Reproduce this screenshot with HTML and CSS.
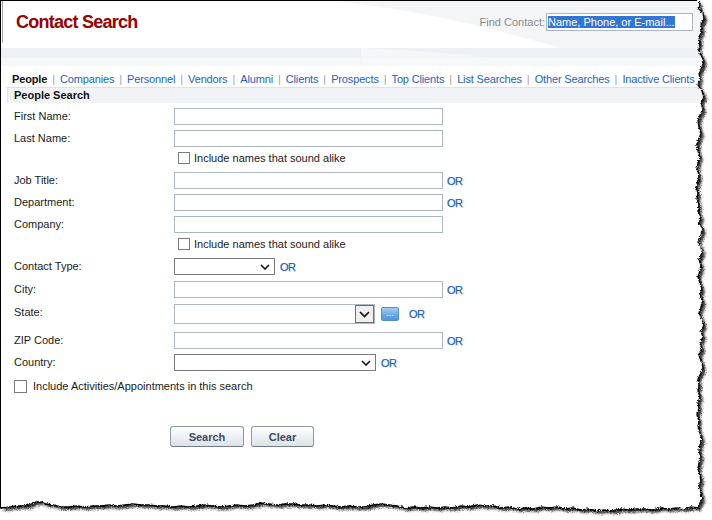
FILE: index.html
```html
<!DOCTYPE html>
<html>
<head>
<meta charset="utf-8">
<title>Contact Search</title>
<link rel="stylesheet" href="styles.css">
</head>
<body>
<div class="shot">
  <div class="page">
    <header class="header">
      <svg class="header-bg" width="711" height="65" viewBox="0 0 711 65">
        <rect x="0" y="0" width="711" height="65" fill="#ffffff"/>
        <path d="M330,0 C420,8 500,30 560,47 L711,47 L711,0 Z" fill="#f3f5f7"/>
        <rect x="0" y="47" width="711" height="10" fill="#edf0f4"/>
        <rect x="0" y="57" width="711" height="8" fill="#f5f7f9"/>
        <path d="M360,47 C440,50 500,57 545,65 L360,65 Z" fill="#f7f8fa" opacity="0.7"/>
        <rect x="1" y="0" width="1" height="42" fill="#a8a8a8"/>
      </svg>
      <h1 class="title">Contact Search</h1>
      <div class="find">
        <span class="find-label">Find Contact:</span>
        <span class="find-box"><span class="find-sel">Name, Phone, or E-mail...</span></span>
      </div>
    </header>

    <nav class="tabs">
      <span class="tab-active">People</span><span class="sep">|</span>
      <a class="tab" href="#">Companies</a><span class="sep">|</span>
      <a class="tab" href="#">Personnel</a><span class="sep">|</span>
      <a class="tab" href="#">Vendors</a><span class="sep">|</span>
      <a class="tab" href="#">Alumni</a><span class="sep">|</span>
      <a class="tab" href="#">Clients</a><span class="sep">|</span>
      <a class="tab" href="#">Prospects</a><span class="sep">|</span>
      <a class="tab" href="#">Top Clients</a><span class="sep">|</span>
      <a class="tab" href="#">List Searches</a><span class="sep">|</span>
      <a class="tab" href="#">Other Searches</a><span class="sep">|</span>
      <a class="tab" href="#">Inactive Clients</a>
    </nav>

    <div class="section-bar">People Search</div>

    <div class="form">
      <div class="row h22">
        <div class="label">First Name:</div>
        <div class="ctl"><span class="input"></span></div>
      </div>
      <div class="row h22">
        <div class="label">Last Name:</div>
        <div class="ctl"><span class="input"></span></div>
      </div>
      <div class="row h20">
        <div class="label"></div>
        <div class="ctl check-ctl"><span class="checkbox"></span><span class="check-text">Include names that sound alike</span></div>
      </div>
      <div class="row h22">
        <div class="label">Job Title:</div>
        <div class="ctl"><span class="input"></span><span class="or">OR</span></div>
      </div>
      <div class="row h22">
        <div class="label">Department:</div>
        <div class="ctl"><span class="input"></span><span class="or">OR</span></div>
      </div>
      <div class="row h22">
        <div class="label">Company:</div>
        <div class="ctl"><span class="input"></span></div>
      </div>
      <div class="row h20">
        <div class="label"></div>
        <div class="ctl check-ctl"><span class="checkbox"></span><span class="check-text">Include names that sound alike</span></div>
      </div>
      <div class="row h23">
        <div class="label">Contact Type:</div>
        <div class="ctl">
          <span class="select select-type">
            <svg class="chev" width="10" height="6" viewBox="0 0 10 6"><path d="M1 1 L5 5 L9 1" fill="none" stroke="#111" stroke-width="1.6"/></svg>
          </span>
          <span class="or or-sel">OR</span>
        </div>
      </div>
      <div class="row h23">
        <div class="label">City:</div>
        <div class="ctl"><span class="input"></span><span class="or">OR</span></div>
      </div>
      <div class="row h28">
        <div class="label">State:</div>
        <div class="ctl">
          <span class="select-state">
            <span class="state-btn">
              <svg width="11" height="7" viewBox="0 0 11 7"><path d="M1 1 L5.5 5.5 L10 1" fill="none" stroke="#111" stroke-width="1.7"/></svg>
            </span>
          </span>
          <span class="dots-btn">...</span>
          <span class="or or-state">OR</span>
        </div>
      </div>
      <div class="row h22">
        <div class="label">ZIP Code:</div>
        <div class="ctl"><span class="input"></span><span class="or">OR</span></div>
      </div>
      <div class="row h26">
        <div class="label">Country:</div>
        <div class="ctl">
          <span class="select select-country">
            <svg class="chev" width="10" height="6" viewBox="0 0 10 6"><path d="M1 1 L5 5 L9 1" fill="none" stroke="#111" stroke-width="1.6"/></svg>
          </span>
          <span class="or or-sel">OR</span>
        </div>
      </div>
      <div class="row-activities">
        <span class="checkbox big"></span><span class="act-text">Include Activities/Appointments in this search</span>
      </div>
      <div class="buttons">
        <span class="btn btn-search">Search</span>
        <span class="btn btn-clear">Clear</span>
      </div>
    </div>
  </div>

  <svg class="torn" width="712" height="520" viewBox="0 0 712 520">
    <defs>
      <clipPath id="outside">
        <path d="M697,0 L699,4 L698,8 L702,12 L703,18 L700,24 L701,30 L698,36 L699,42 L697,48 L700,54 L703,60 L701,66 L698,72 L699,78 L697,84 L701,90 L703,96 L700,102 L702,108 L699,114 L697,120 L698,126 L700,132 L698,138 L696,144 L697,150 L699,156 L697,162 L696,168 L698,174 L697,180 L695,186 L697,192 L696,198 L698,204 L697,210 L700,216 L698,222 L702,228 L700,234 L697,240 L700,246 L701,252 L698,258 L700,264 L699,270 L697,276 L699,282 L701,288 L699,294 L702,300 L700,306 L698,312 L701,318 L703,324 L700,330 L702,336 L699,342 L701,348 L698,354 L700,360 L702,366 L700,372 L697,378 L698,384 L697,390 L699,396 L697,402 L698,408 L696,414 L698,420 L697,426 L699,432 L701,438 L699,444 L698,450 L700,456 L698,462 L697,468 L699,474 L700,480 L698,486 L700,492 L701,498 L698,504 L697,507 L690,506 L684,508 L676,507 L668,508 L660,507 L652,509 L644,508 L636,508 L628,509 L620,508 L612,510 L604,509 L596,510 L588,508 L580,509 L572,507 L564,508 L556,506 L548,507 L540,506 L532,508 L524,507 L516,508 L508,506 L500,507 L492,505 L484,505 L476,504 L468,506 L460,505 L452,507 L444,506 L436,507 L428,506 L420,507 L412,506 L404,507 L396,505 L388,504 L380,503 L372,504 L364,506 L356,506 L348,505 L340,506 L332,505 L324,504 L316,505 L308,504 L300,504 L292,503 L284,503 L276,504 L268,503 L260,502 L252,504 L244,505 L236,504 L228,505 L220,506 L212,505 L204,504 L196,505 L188,506 L180,505 L172,506 L164,505 L156,505 L148,504 L140,504 L132,503 L124,504 L116,505 L108,504 L100,505 L92,505 L84,506 L76,505 L68,506 L60,506 L52,504 L45,503 L40,501 L35,501 L30,503 L24,505 L16,505 L8,506 L0,507 L0,520 L712,520 L712,0 Z"/>
      </clipPath>
      <filter id="blur" x="-5%" y="-5%" width="110%" height="110%">
        <feGaussianBlur stdDeviation="1.2"/>
      </filter>
      <filter id="rough" x="-3%" y="-3%" width="106%" height="106%">
        <feTurbulence type="turbulence" baseFrequency="0.55" numOctaves="1" seed="3" result="noise"/>
        <feDisplacementMap in="SourceGraphic" in2="noise" scale="3" xChannelSelector="R" yChannelSelector="G"/>
      </filter>
    </defs>
    <g filter="url(#rough)">
    <path d="M697,0 L699,4 L698,8 L702,12 L703,18 L700,24 L701,30 L698,36 L699,42 L697,48 L700,54 L703,60 L701,66 L698,72 L699,78 L697,84 L701,90 L703,96 L700,102 L702,108 L699,114 L697,120 L698,126 L700,132 L698,138 L696,144 L697,150 L699,156 L697,162 L696,168 L698,174 L697,180 L695,186 L697,192 L696,198 L698,204 L697,210 L700,216 L698,222 L702,228 L700,234 L697,240 L700,246 L701,252 L698,258 L700,264 L699,270 L697,276 L699,282 L701,288 L699,294 L702,300 L700,306 L698,312 L701,318 L703,324 L700,330 L702,336 L699,342 L701,348 L698,354 L700,360 L702,366 L700,372 L697,378 L698,384 L697,390 L699,396 L697,402 L698,408 L696,414 L698,420 L697,426 L699,432 L701,438 L699,444 L698,450 L700,456 L698,462 L697,468 L699,474 L700,480 L698,486 L700,492 L701,498 L698,504 L697,507 L690,506 L684,508 L676,507 L668,508 L660,507 L652,509 L644,508 L636,508 L628,509 L620,508 L612,510 L604,509 L596,510 L588,508 L580,509 L572,507 L564,508 L556,506 L548,507 L540,506 L532,508 L524,507 L516,508 L508,506 L500,507 L492,505 L484,505 L476,504 L468,506 L460,505 L452,507 L444,506 L436,507 L428,506 L420,507 L412,506 L404,507 L396,505 L388,504 L380,503 L372,504 L364,506 L356,506 L348,505 L340,506 L332,505 L324,504 L316,505 L308,504 L300,504 L292,503 L284,503 L276,504 L268,503 L260,502 L252,504 L244,505 L236,504 L228,505 L220,506 L212,505 L204,504 L196,505 L188,506 L180,505 L172,506 L164,505 L156,505 L148,504 L140,504 L132,503 L124,504 L116,505 L108,504 L100,505 L92,505 L84,506 L76,505 L68,506 L60,506 L52,504 L45,503 L40,501 L35,501 L30,503 L24,505 L16,505 L8,506 L0,507 L-20,507 L-20,540 L740,540 L740,-20 L697,-20 Z" fill="#ffffff"/>
    <g clip-path="url(#outside)">
      <path transform="translate(3,3)" filter="url(#blur)" fill="#3a3a3a" d="M0,0 L697,0 L699,4 L698,8 L702,12 L703,18 L700,24 L701,30 L698,36 L699,42 L697,48 L700,54 L703,60 L701,66 L698,72 L699,78 L697,84 L701,90 L703,96 L700,102 L702,108 L699,114 L697,120 L698,126 L700,132 L698,138 L696,144 L697,150 L699,156 L697,162 L696,168 L698,174 L697,180 L695,186 L697,192 L696,198 L698,204 L697,210 L700,216 L698,222 L702,228 L700,234 L697,240 L700,246 L701,252 L698,258 L700,264 L699,270 L697,276 L699,282 L701,288 L699,294 L702,300 L700,306 L698,312 L701,318 L703,324 L700,330 L702,336 L699,342 L701,348 L698,354 L700,360 L702,366 L700,372 L697,378 L698,384 L697,390 L699,396 L697,402 L698,408 L696,414 L698,420 L697,426 L699,432 L701,438 L699,444 L698,450 L700,456 L698,462 L697,468 L699,474 L700,480 L698,486 L700,492 L701,498 L698,504 L697,507 L690,506 L684,508 L676,507 L668,508 L660,507 L652,509 L644,508 L636,508 L628,509 L620,508 L612,510 L604,509 L596,510 L588,508 L580,509 L572,507 L564,508 L556,506 L548,507 L540,506 L532,508 L524,507 L516,508 L508,506 L500,507 L492,505 L484,505 L476,504 L468,506 L460,505 L452,507 L444,506 L436,507 L428,506 L420,507 L412,506 L404,507 L396,505 L388,504 L380,503 L372,504 L364,506 L356,506 L348,505 L340,506 L332,505 L324,504 L316,505 L308,504 L300,504 L292,503 L284,503 L276,504 L268,503 L260,502 L252,504 L244,505 L236,504 L228,505 L220,506 L212,505 L204,504 L196,505 L188,506 L180,505 L172,506 L164,505 L156,505 L148,504 L140,504 L132,503 L124,504 L116,505 L108,504 L100,505 L92,505 L84,506 L76,505 L68,506 L60,506 L52,504 L45,503 L40,501 L35,501 L30,503 L24,505 L16,505 L8,506 L0,507 Z"/>
    </g>
    <path fill="none" stroke="#000000" stroke-width="1.3" d="M697,0 L699,4 L698,8 L702,12 L703,18 L700,24 L701,30 L698,36 L699,42 L697,48 L700,54 L703,60 L701,66 L698,72 L699,78 L697,84 L701,90 L703,96 L700,102 L702,108 L699,114 L697,120 L698,126 L700,132 L698,138 L696,144 L697,150 L699,156 L697,162 L696,168 L698,174 L697,180 L695,186 L697,192 L696,198 L698,204 L697,210 L700,216 L698,222 L702,228 L700,234 L697,240 L700,246 L701,252 L698,258 L700,264 L699,270 L697,276 L699,282 L701,288 L699,294 L702,300 L700,306 L698,312 L701,318 L703,324 L700,330 L702,336 L699,342 L701,348 L698,354 L700,360 L702,366 L700,372 L697,378 L698,384 L697,390 L699,396 L697,402 L698,408 L696,414 L698,420 L697,426 L699,432 L701,438 L699,444 L698,450 L700,456 L698,462 L697,468 L699,474 L700,480 L698,486 L700,492 L701,498 L698,504 L697,507 L690,506 L684,508 L676,507 L668,508 L660,507 L652,509 L644,508 L636,508 L628,509 L620,508 L612,510 L604,509 L596,510 L588,508 L580,509 L572,507 L564,508 L556,506 L548,507 L540,506 L532,508 L524,507 L516,508 L508,506 L500,507 L492,505 L484,505 L476,504 L468,506 L460,505 L452,507 L444,506 L436,507 L428,506 L420,507 L412,506 L404,507 L396,505 L388,504 L380,503 L372,504 L364,506 L356,506 L348,505 L340,506 L332,505 L324,504 L316,505 L308,504 L300,504 L292,503 L284,503 L276,504 L268,503 L260,502 L252,504 L244,505 L236,504 L228,505 L220,506 L212,505 L204,504 L196,505 L188,506 L180,505 L172,506 L164,505 L156,505 L148,504 L140,504 L132,503 L124,504 L116,505 L108,504 L100,505 L92,505 L84,506 L76,505 L68,506 L60,506 L52,504 L45,503 L40,501 L35,501 L30,503 L24,505 L16,505 L8,506 L0,507"/>
    </g>
  </svg>
</div>
</body>
</html>
```

FILE: styles.css
```css
html, body {
  margin: 0;
  padding: 0;
  background: #ffffff;
}

body {
  font-family: "Liberation Sans", Arial, sans-serif;
  font-size: 11px;
  color: #1a1a1a;
}

.shot {
  position: relative;
  width: 712px;
  height: 520px;
  overflow: hidden;
}

.page {
  width: 712px;
  height: 520px;
  box-sizing: border-box;
  border-top: 1px solid #000;
  border-left: 1px solid #000;
  background: #fff;
}

/* Header */
.header {
  position: relative;
  height: 65px;
  box-sizing: border-box;
  display: flex;
  align-items: flex-start;
  padding: 0 19px 0 15px;
}

.header-bg {
  position: absolute;
  left: 0;
  top: 0;
  z-index: 0;
}

.title {
  position: relative;
  z-index: 1;
  margin: 10px 0 0 0;
  font-size: 18px;
  line-height: 22px;
  font-weight: bold;
  letter-spacing: -0.75px;
  color: #990000;
}

.find {
  position: relative;
  z-index: 1;
  margin: 12px 0 0 auto;
  display: flex;
  align-items: center;
}

.find-label {
  color: #8a8a8a;
  margin-right: 1px;
}

.find-box {
  width: 147px;
  height: 18px;
  box-sizing: border-box;
  border: 1px solid #a9b6c2;
  background: #fff;
  display: flex;
  align-items: center;
  padding-left: 1px;
}

.find-sel {
  background: #3176d6;
  color: #fff;
  line-height: 12px;
  height: 12px;
  white-space: nowrap;
}

/* Tabs */
.tabs {
  height: 21px;
  box-sizing: border-box;
  padding: 5px 0 0 11px;
  line-height: 16px;
  white-space: nowrap;
  display: flex;
  letter-spacing: -0.15px;
}

.tab-active {
  font-weight: bold;
  color: #111;
}

.tab {
  color: #1b62bd;
  text-decoration: none;
}

.sep {
  color: #a3a3a3;
  margin: 0 5.1px 0 5px;
}

/* Section bar */
.section-bar {
  margin-left: 6px;
  height: 16px;
  box-sizing: border-box;
  border-top: 1px solid #dde3e9;
  border-left: 1px solid #dde3e9;
  background: #f1f3f6;
  padding-left: 6px;
  font-weight: bold;
  line-height: 15px;
  color: #111;
}

/* Form */
.form {
  padding: 5px 0 0 13px;
}

.row {
  display: flex;
  align-items: flex-start;
}

.h20 { height: 20px; }
.h22 { height: 22px; }
.h23 { height: 23px; }
.h26 { height: 26px; }
.h28 { height: 28px; }

.label {
  width: 160px;
  flex: 0 0 160px;
  line-height: 16px;
  color: #1a1a1a;
}

.ctl {
  display: flex;
  align-items: center;
}

.input {
  display: block;
  width: 269px;
  height: 17px;
  box-sizing: border-box;
  border: 1px solid #a9b8c4;
  background: #fff;
}

.or {
  color: #1b62bd;
  margin-left: 4px;
  line-height: 14px;
  letter-spacing: -0.6px;
  -webkit-text-stroke: 0.25px #1b62bd;
}

.or-sel {
  margin-left: 5px;
}

.or-state {
  margin-left: 10px;
}

.check-ctl {
  padding-left: 4px;
  height: 12px;
}

.checkbox {
  display: block;
  width: 12px;
  height: 12px;
  box-sizing: border-box;
  border: 1px solid #7b7b7b;
  background: #fff;
}

.checkbox.big {
  width: 13px;
  height: 13px;
}

.check-text {
  margin-left: 4px;
  line-height: 12px;
}

.select {
  display: flex;
  align-items: center;
  justify-content: flex-end;
  height: 17px;
  box-sizing: border-box;
  border: 1px solid #7a7a7a;
  background: #fff;
}

.select-type {
  width: 101px;
  padding-right: 4px;
}

.select-country {
  width: 202px;
  padding-right: 4px;
}

.chev {
  display: block;
}

.select-state {
  display: flex;
  justify-content: flex-end;
  width: 201px;
  height: 20px;
  box-sizing: border-box;
  border: 1px solid #a9b8c4;
  background: #fff;
}

.state-btn {
  display: flex;
  align-items: center;
  justify-content: center;
  width: 19px;
  height: 18px;
  box-sizing: border-box;
  border: 1px solid #6f6f6f;
  background: #efefef;
}

.dots-btn {
  display: flex;
  align-items: center;
  justify-content: center;
  margin-left: 6px;
  width: 18px;
  height: 14px;
  box-sizing: border-box;
  border: 1px solid #4f8fd0;
  border-radius: 2px;
  background: linear-gradient(#a6cff3, #6ea9e6 55%, #5394dc);
  color: #fff;
  font-size: 9px;
  line-height: 8px;
  padding-bottom: 2px;
}

.row-activities {
  display: flex;
  align-items: center;
  height: 13px;
}

.act-text {
  margin-left: 6px;
  line-height: 13px;
}

.buttons {
  display: flex;
  margin-top: 33px;
  padding-left: 156px;
}

.btn {
  display: flex;
  align-items: center;
  justify-content: center;
  height: 21px;
  box-sizing: border-box;
  border: 1px solid #8d99a6;
  border-bottom-color: #6f7b88;
  border-radius: 3px;
  background: linear-gradient(#fdfeff, #eef1f4 50%, #dce2e8);
  font-weight: bold;
  color: #3b4b5e;
  line-height: 14px;
}

.btn-search {
  width: 74px;
}

.btn-clear {
  width: 63px;
  margin-left: 7px;
}

/* Torn screenshot edge overlay */
.torn {
  position: absolute;
  left: 0;
  top: 0;
  pointer-events: none;
}
```
